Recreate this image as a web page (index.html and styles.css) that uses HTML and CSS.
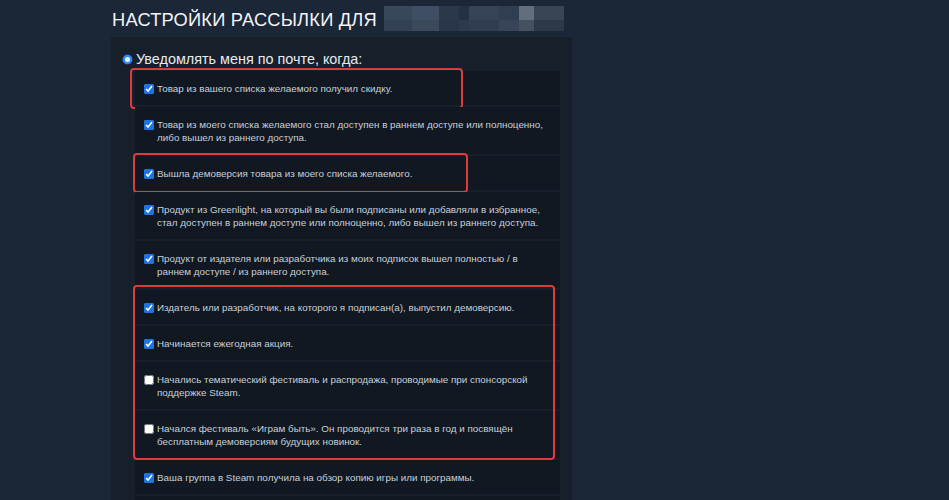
FILE: index.html
```html
<!DOCTYPE html>
<html lang="ru">
<head>
<meta charset="utf-8">
<title>Настройки рассылки</title>
<link rel="stylesheet" href="styles.css">
</head>
<body>
<div class="page">
  <div class="head">
    <h1 class="title">НАСТРОЙКИ РАССЫЛКИ ДЛЯ</h1>
    <div class="blur">
      <span class="b1"></span><span class="b2"></span><span class="b3"></span><span class="b4"></span><span class="b5"></span><span class="b6"></span><span class="b7"></span><span class="b8"></span>
      <span class="c1"></span><span class="c2"></span><span class="c3"></span><span class="c4"></span><span class="c5"></span><span class="c6"></span><span class="c7"></span><span class="c8"></span>
    </div>
  </div>
  <div class="panel">
    <div class="notify">
      <span class="radio"></span>
      <span class="notify-text">Уведомлять меня по почте, когда:</span>
    </div>
    <div class="list">
      <div class="row">
        <input type="checkbox" class="cb" checked>
        <span class="label">Товар из вашего списка желаемого получил скидку.</span>
        <span class="hl hl-1"></span>
      </div>
      <div class="row">
        <input type="checkbox" class="cb" checked>
        <span class="label">Товар из моего списка желаемого стал доступен в раннем доступе или полноценно,<br>либо вышел из раннего доступа.</span>
      </div>
      <div class="row">
        <input type="checkbox" class="cb" checked>
        <span class="label">Вышла демоверсия товара из моего списка желаемого.</span>
        <span class="hl hl-2"></span>
      </div>
      <div class="row">
        <input type="checkbox" class="cb" checked>
        <span class="label">Продукт из Greenlight, на который вы были подписаны или добавляли в избранное,<br>стал доступен в раннем доступе или полноценно, либо вышел из раннего доступа.</span>
      </div>
      <div class="row">
        <input type="checkbox" class="cb" checked>
        <span class="label">Продукт от издателя или разработчика из моих подписок вышел полностью / в<br>раннем доступе / из раннего доступа.</span>
      </div>
      <div class="group">
        <div class="row">
          <input type="checkbox" class="cb" checked>
          <span class="label">Издатель или разработчик, на которого я подписан(а), выпустил демоверсию.</span>
        </div>
        <div class="row">
          <input type="checkbox" class="cb" checked>
          <span class="label">Начинается ежегодная акция.</span>
        </div>
        <div class="row">
          <input type="checkbox" class="cb">
          <span class="label">Начались тематический фестиваль и распродажа, проводимые при спонсорской<br>поддержке Steam.</span>
        </div>
        <div class="row">
          <input type="checkbox" class="cb">
          <span class="label">Начался фестиваль «Играм быть». Он проводится три раза в год и посвящён<br>бесплатным демоверсиям будущих новинок.</span>
        </div>
        <span class="hl hl-3"></span>
      </div>
      <div class="row">
        <input type="checkbox" class="cb" checked>
        <span class="label">Ваша группа в Steam получила на обзор копию игры или программы.</span>
      </div>
      <div class="row row-peek"></div>
    </div>
  </div>
</div>
</body>
</html>
```

FILE: styles.css
```css
html, body {
  margin: 0;
  padding: 0;
  background: #1b2636;
  height: 100%;
  overflow: hidden;
}

body {
  font-family: "Liberation Sans", Arial, sans-serif;
}

.page {
  margin-left: 111px;
  width: 461px;
}

.head {
  height: 37px;
  display: flex;
  align-items: flex-start;
}

.title {
  margin: 10px 0 0 1px;
  font-size: 18.3px;
  font-weight: normal;
  letter-spacing: 0.2px;
  color: #f2f4f6;
  line-height: 20px;
  white-space: nowrap;
}

.blur {
  margin: 6px 0 0 7px;
  width: 180px;
  height: 25px;
  display: grid;
  grid-template-columns: 28px 27px 20px 10px 30px 20px 15px 30px;
  grid-template-rows: 14px 11px;
  opacity: 0.9;
}

.b1 { background: #3c4b5f; }
.b2 { background: #44536a; }
.b3 { background: #2d3b4f; }
.b4 { background: #253346; }
.b5 { background: #3a475a; }
.b6 { background: #334156; }
.b7 { background: #6a7586; }
.b8 { background: #3d4959; }
.c1 { background: #36455a; }
.c2 { background: #3f4d62; }
.c3 { background: #2a384c; }
.c4 { background: #2f3d51; }
.c5 { background: #324054; }
.c6 { background: #3c495c; }
.c7 { background: #4a5566; }
.c8 { background: #2f3a4b; }

.panel {
  background: #171f2b;
  padding: 14px 12px 20px 12px;
  min-height: 480px;
}

.notify {
  display: flex;
  align-items: center;
  gap: 4px;
  height: 16px;
}

.radio {
  width: 5px;
  height: 5px;
  border-radius: 50%;
  border: 2px solid #2f8cf2;
  background: #e8f2ff;
  box-shadow: 0 0 0 0.5px #1f6fcf;
}

.notify-text {
  font-size: 14.4px;
  color: #e6ebef;
  line-height: 16px;
}

.list {
  margin: 4px 0 0 12px;
  display: flex;
  flex-direction: column;
  gap: 2px;
}

.group {
  position: relative;
  display: flex;
  flex-direction: column;
  gap: 2px;
}

.row {
  position: relative;
  background: #121821;
  display: flex;
  align-items: flex-start;
  gap: 3px;
  padding: 11px 10px 10px 9px;
}

.row-peek {
  height: 20px;
}

.cb {
  width: 10px;
  height: 10px;
  margin: 1.5px 0 0 0;
  flex: none;
  accent-color: #1a73e8;
}

.label {
  font-size: 9.85px;
  line-height: 13px;
  color: #c6d0da;
  white-space: nowrap;
}

.hl {
  position: absolute;
  border: 2px solid #dc3c3c;
  border-radius: 4px;
  pointer-events: none;
}

.hl-1 {
  left: -5px;
  top: -3px;
  width: 329px;
  height: 37px;
}

.hl-2 {
  left: -2px;
  top: -3px;
  width: 331px;
  height: 36px;
}

.hl-3 {
  left: -2px;
  top: -5px;
  right: 5px;
  bottom: -2px;
}
```
